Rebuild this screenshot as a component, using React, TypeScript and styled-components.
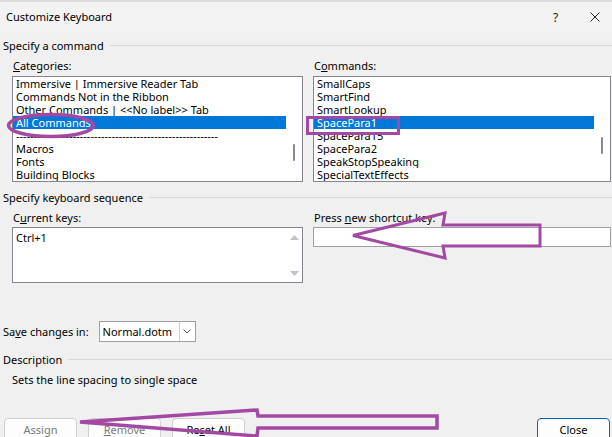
import React from "react";
import styled, { createGlobalStyle } from "styled-components";

const GlobalStyle = createGlobalStyle`
  html, body { margin: 0; padding: 0; background: #f0f0f0; }
  body { font-family: "Noto Sans", "Open Sans", sans-serif; font-size: 11px; color: #000; }
  * { box-sizing: border-box; }
`;

const Window = styled.div`
  position: relative;
  width: 612px;
  height: 437px;
  overflow: hidden;
  background: #f0f0f0;
  display: flex;
  flex-direction: column;
`;

const TitleBar = styled.div`
  height: 32px;
  flex: none;
  display: flex;
  align-items: center;
  background: #f3f3f3;
  border-top: 2px solid #dcdcdc;
  padding-left: 6px;
`;

const TitleText = styled.div`
  flex: 1;
  font-size: 11px;
  padding-bottom: 1px;
`;

const TitleButton = styled.div<{ $w: number }>`
  width: ${(p) => p.$w}px;
  height: 30px;
  display: flex;
  align-items: center;
  justify-content: center;
  font-size: 12px;
  color: #222;
`;

const Body = styled.div`
  flex: 1;
  display: flex;
  flex-direction: column;
`;

const GroupHeader = styled.div<{ $mt: number }>`
  display: flex;
  align-items: center;
  gap: 6px;
  margin-top: ${(p) => p.$mt}px;
  padding-left: 3px;
  height: 14px;
  line-height: 14px;
  &::after {
    content: "";
    flex: 1;
    height: 1px;
    background: #d8d8d8;
    margin-top: -1px;
  }
`;

const TwoCols = styled.div<{ $mt: number }>`
  display: grid;
  grid-template-columns: 291px 298px;
  column-gap: 10px;
  padding-left: 12px;
  margin-top: ${(p) => p.$mt}px;
`;

const Field = styled.div`
  display: flex;
  flex-direction: column;
`;

const Label = styled.div`
  height: 14px;
  line-height: 14px;
  padding-left: 1px;
  margin-bottom: 2px;
`;

const ListBox = styled.div`
  margin-top: 1px;
  height: 106px;
  border: 1px solid #828790;
  background: #fff;
  display: flex;
`;

const ListItems = styled.div`
  flex: 1;
  overflow: hidden;
`;

const ListItem = styled.div<{ $selected?: boolean }>`
  height: 13px;
  line-height: 13px;
  padding-left: 3px;
  white-space: nowrap;
  overflow: hidden;
  background: ${(p) => (p.$selected ? "#0078d7" : "transparent")};
  color: ${(p) => (p.$selected ? "#fff" : "#000")};
`;

const ScrollTrack = styled.div`
  width: 16px;
  flex: none;
  display: flex;
  flex-direction: column;
  align-items: center;
`;

const ScrollThumb = styled.div<{ $top: number; $h: number }>`
  width: 2px;
  margin-top: ${(p) => p.$top}px;
  height: ${(p) => p.$h}px;
  background: #8a8a8a;
  border-radius: 1px;
`;

const KeysBox = styled.div`
  height: 56px;
  border: 1px solid #828790;
  background: #fff;
  display: flex;
`;

const KeysText = styled.div`
  flex: 1;
  padding: 3px 0 0 3px;
  line-height: 13px;
`;

const ArrowTrack = styled.div`
  width: 16px;
  flex: none;
  display: flex;
  flex-direction: column;
  justify-content: space-between;
  align-items: center;
  padding: 7px 0 6px 0;
`;

const ShortcutInput = styled.div`
  height: 20px;
  border: 1px solid #a0a0a0;
  background: #fff;
`;

const SaveRow = styled.div`
  display: flex;
  align-items: center;
  gap: 10px;
  margin-top: 38px;
  padding-left: 3px;
`;

const Dropdown = styled.div`
  width: 97px;
  height: 21px;
  border: 1px solid #a0a0a0;
  background: #fff;
  display: flex;
`;

const DropdownValue = styled.div`
  flex: 1;
  padding-left: 3px;
  line-height: 19px;
`;

const DropdownButton = styled.div`
  width: 16px;
  border-left: 1px solid #cfcfcf;
  display: flex;
  align-items: center;
  justify-content: center;
`;

const DescriptionText = styled.div`
  margin-top: 6px;
  padding-left: 12px;
  height: 14px;
  line-height: 14px;
`;

const ButtonRow = styled.div`
  display: flex;
  margin-top: 31px;
  padding: 0 2px 0 4px;
`;

const ButtonGroup = styled.div`
  display: flex;
  gap: 11px;
  flex: 1;
`;

const Button = styled.div<{ $disabled?: boolean; $default?: boolean }>`
  width: 73px;
  height: 24px;
  border-radius: 4px;
  background: #fdfdfd;
  border: 1px solid ${(p) => (p.$default ? "#0067c0" : "#d0d0d0")};
  color: ${(p) => (p.$disabled ? "#7a7a7a" : "#000")};
  display: flex;
  justify-content: center;
  padding-top: 4px;
  line-height: 14px;
`;

const Overlay = styled.svg`
  position: absolute;
  left: 0;
  top: 0;
  pointer-events: none;
`;

const categories = [
  "Immersive | Immersive Reader Tab",
  "Commands Not in the Ribbon",
  "Other Commands | <<No label>> Tab",
  "All Commands",
  "-".repeat(57),
  "Macros",
  "Fonts",
  "Building Blocks",
];

const commands = [
  "SmallCaps",
  "SmartFind",
  "SmartLookup",
  "SpacePara1",
  "SpacePara15",
  "SpacePara2",
  "SpeakStopSpeaking",
  "SpecialTextEffects",
];

const Triangle: React.FC<{ up?: boolean }> = ({ up }) => (
  <svg width="9" height="5" viewBox="0 0 9 5">
    <path d={up ? "M0 5 L4.5 0 L9 5 Z" : "M0 0 L4.5 5 L9 0 Z"} fill="#c2c2c2" />
  </svg>
);

export default function App() {
  const purple = "#a349a4";
  return (
    <>
      <GlobalStyle />
      <Window>
        <TitleBar>
          <TitleText>Customize Keyboard</TitleText>
          <TitleButton $w={45}>?</TitleButton>
          <TitleButton $w={34}>
            <svg width="10" height="10" viewBox="0 0 10 10">
              <path d="M0.5 0.5 L9.5 9.5 M9.5 0.5 L0.5 9.5" stroke="#222" strokeWidth="1" />
            </svg>
          </TitleButton>
        </TitleBar>
        <Body>
          <GroupHeader $mt={7}>Specify a command</GroupHeader>
          <TwoCols $mt={6}>
            <Field>
              <Label>
                <u>C</u>ategories:
              </Label>
              <ListBox>
                <ListItems>
                  {categories.map((c, i) => (
                    <ListItem key={i} $selected={i === 3}>
                      {c}
                    </ListItem>
                  ))}
                </ListItems>
                <ScrollTrack>
                  <ScrollThumb $top={67} $h={17} />
                </ScrollTrack>
              </ListBox>
            </Field>
            <Field>
              <Label>
                C<u>o</u>mmands:
              </Label>
              <ListBox>
                <ListItems>
                  {commands.map((c, i) => (
                    <ListItem key={i} $selected={i === 3}>
                      {c}
                    </ListItem>
                  ))}
                </ListItems>
                <ScrollTrack>
                  <ScrollThumb $top={60} $h={17} />
                </ScrollTrack>
              </ListBox>
            </Field>
          </TwoCols>
          <GroupHeader $mt={9}>Specify keyboard sequence</GroupHeader>
          <TwoCols $mt={6}>
            <Field>
              <Label>
                C<u>u</u>rrent keys:
              </Label>
              <KeysBox>
                <KeysText>Ctrl+1</KeysText>
                <ArrowTrack>
                  <Triangle up />
                  <Triangle />
                </ArrowTrack>
              </KeysBox>
            </Field>
            <Field>
              <Label>
                Press <u>n</u>ew shortcut key:
              </Label>
              <ShortcutInput />
            </Field>
          </TwoCols>
          <SaveRow>
            <span>
              Sa<u>v</u>e changes in:
            </span>
            <Dropdown>
              <DropdownValue>Normal.dotm</DropdownValue>
              <DropdownButton>
                <svg width="8" height="5" viewBox="0 0 8 5">
                  <path d="M0.5 0.5 L4 4 L7.5 0.5" stroke="#555" strokeWidth="1" fill="none" />
                </svg>
              </DropdownButton>
            </Dropdown>
          </SaveRow>
          <GroupHeader $mt={11}>Description</GroupHeader>
          <DescriptionText>Sets the line spacing to single space</DescriptionText>
          <ButtonRow>
            <ButtonGroup>
              <Button $disabled>Assign</Button>
              <Button $disabled>
                <span>
                  <u>R</u>emove
                </span>
              </Button>
              <Button>
                <span>
                  Re<u>s</u>et All
                </span>
              </Button>
            </ButtonGroup>
            <Button $default>Close</Button>
          </ButtonRow>
        </Body>
        <Overlay width="612" height="437" viewBox="0 0 612 437">
          <ellipse cx="51" cy="125.5" rx="42.5" ry="11" fill="none" stroke={purple} strokeWidth="3.5" />
          <rect x="307.5" y="117.5" width="91" height="16" fill="none" stroke={purple} strokeWidth="3" />
          <path
            d="M353 235.5 L445 213 L443 225 L540 225 L540 246 L443 246 L445 258 Z"
            fill="none"
            stroke={purple}
            strokeWidth="3"
            strokeLinejoin="miter"
          />
          <path
            d="M80 422 L257 410 L258 416 L437 416 L437 428 L258 428 L257 436 Z"
            fill="none"
            stroke={purple}
            strokeWidth="3.5"
          />
        </Overlay>
      </Window>
    </>
  );
}
